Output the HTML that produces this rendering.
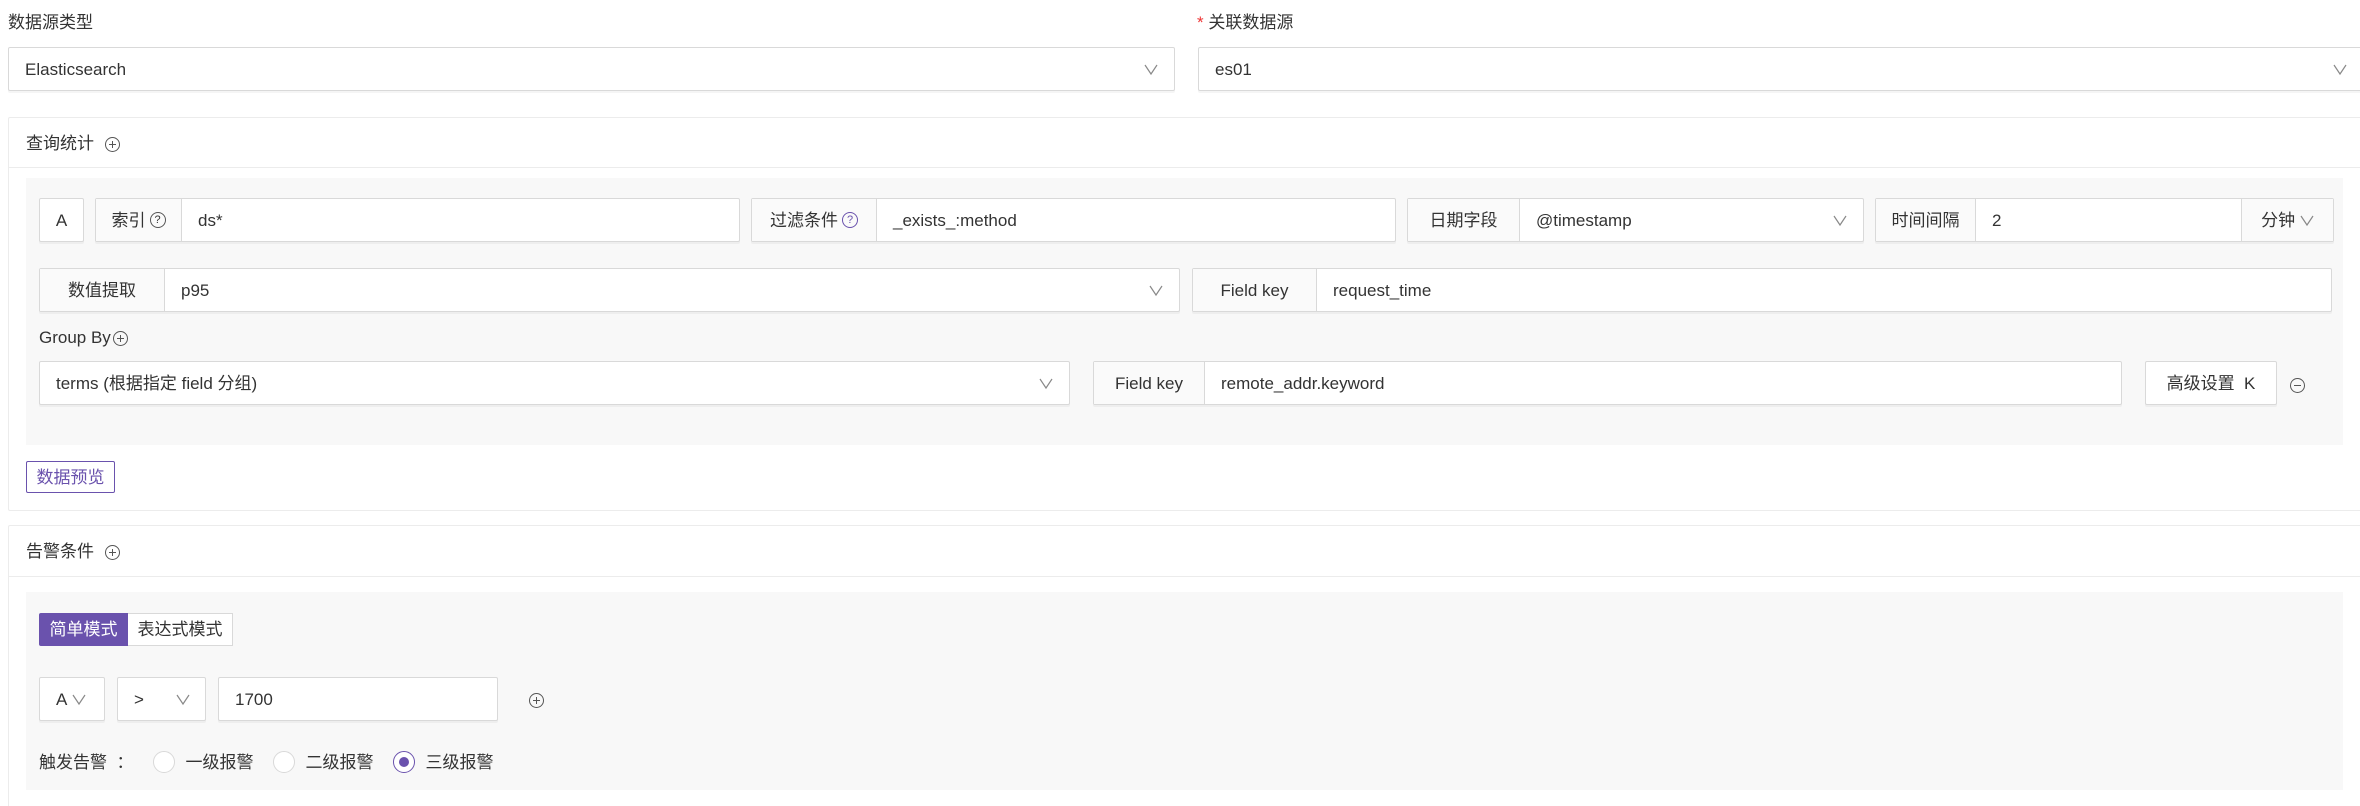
<!DOCTYPE html>
<html><head><meta charset="utf-8"><style>
*{box-sizing:border-box;margin:0;padding:0}
html,body{width:2360px;height:806px;overflow:hidden}
body{background:#fff;font-family:"Liberation Sans","Noto Sans CJK SC",sans-serif;font-size:17px;line-height:1;color:#333}
#w{position:relative;width:2360px;height:806px;overflow:hidden}
.a{position:absolute}
.box{position:absolute;border:1px solid #d9d9d9;background:#fff;border-radius:2px;box-shadow:0 2px 0 rgba(0,0,0,.04);display:flex;align-items:center}
.lab{background:#fafafa;border-right:1px solid #d9d9d9;height:100%;display:flex;align-items:center;justify-content:center;flex:none}
.val{padding-left:16px;flex:1}
.arr{width:14px;height:14px;margin-right:16px;flex:none}
.panel{position:absolute;left:8px;right:-2px;border:1px solid #ececec;border-radius:2px}
.gray{position:absolute;background:#f8f8f8}
.circ{display:inline-block;width:15px;height:15px;border:1.3px solid #555;border-radius:50%;position:relative;vertical-align:middle}
.circ:before{content:"";position:absolute;left:3px;right:3px;top:6px;height:1.3px;background:#555}
.circ.p:after{content:"";position:absolute;top:3px;bottom:3px;left:6px;width:1.3px;background:#555}
.q{display:inline-block;width:16px;height:16px;border:1.3px solid #555;border-radius:50%;font-size:11px;line-height:14px;text-align:center;vertical-align:middle;margin-left:4px}
.radio{display:inline-block;width:22px;height:22px;border:1px solid #d9d9d9;border-radius:50%;background:#fff;vertical-align:middle;margin-right:10px;position:relative}
</style></head><body><div id="w">
<svg width="0" height="0" style="position:absolute"><defs><symbol id="dn" viewBox="0 0 14 14"><path d="M1 3 L7 12 L13 3" fill="none" stroke="#888" stroke-width="1.2"/></symbol></defs></svg>

<div class="a" style="left:8px;top:14px">数据源类型</div>
<div class="box" style="left:8px;top:47px;width:1167px;height:44px"><span class="val">Elasticsearch</span><svg class="arr"><use href="#dn"/></svg></div>
<div class="a" style="left:1197px;top:14px"><span style="color:#e33">*</span> 关联数据源</div>
<div class="box" style="left:1198px;top:47px;width:1180px;height:44px"><span class="val">es01</span><svg class="arr" style="margin-right:30px"><use href="#dn"/></svg></div>

<div class="panel" style="top:117px;height:394px">
 <div class="a" style="left:0;right:0;top:0;height:50px;border-bottom:1px solid #ececec"></div>
 <div class="a" style="left:17px;top:17px">查询统计 <span class="circ p" style="margin-left:6px"></span></div>
</div>
<div class="gray" style="left:26px;top:178px;width:2317px;height:267px"></div>
<div class="box" style="left:39px;top:198px;width:45px;height:44px;justify-content:center">A</div>
<div class="box" style="left:95px;top:198px;width:645px;height:44px"><span class="lab" style="width:86px">索引<span class="q">?</span></span><span class="val">ds*</span></div>
<div class="box" style="left:751px;top:198px;width:645px;height:44px"><span class="lab" style="width:125px">过滤条件<span class="q" style="border-color:#6a52ad;color:#6a52ad">?</span></span><span class="val">_exists_:method</span></div>
<div class="box" style="left:1407px;top:198px;width:457px;height:44px"><span class="lab" style="width:112px">日期字段</span><span class="val">@timestamp</span><svg class="arr"><use href="#dn"/></svg></div>
<div class="box" style="left:1875px;top:198px;width:459px;height:44px"><span class="lab" style="width:100px">时间间隔</span><span class="val">2</span><span class="lab" style="width:92px;border-right:none;border-left:1px solid #d9d9d9">分钟&nbsp;<svg style="width:14px;height:14px"><use href="#dn"/></svg></span></div>

<div class="box" style="left:39px;top:268px;width:1141px;height:44px"><span class="lab" style="width:125px">数值提取</span><span class="val">p95</span><svg class="arr"><use href="#dn"/></svg></div>
<div class="box" style="left:1192px;top:268px;width:1140px;height:44px"><span class="lab" style="width:124px">Field key</span><span class="val">request_time</span></div>

<div class="a" style="left:39px;top:329px">Group By<span class="circ p" style="margin-left:2px"></span></div>
<div class="box" style="left:39px;top:361px;width:1031px;height:44px"><span class="val">terms (根据指定 field 分组)</span><svg class="arr"><use href="#dn"/></svg></div>
<div class="box" style="left:1093px;top:361px;width:1029px;height:44px"><span class="lab" style="width:111px">Field key</span><span class="val">remote_addr.keyword</span></div>
<div class="box" style="left:2145px;top:361px;width:132px;height:44px;justify-content:center">高级设置&nbsp;&nbsp;K</div>
<span class="a circ" style="left:2290px;top:376px"></span>

<div class="a" style="left:26px;top:461px;width:89px;height:32px;border:1.5px solid #6a52ad;border-radius:2px;color:#6a52ad;display:flex;align-items:center;justify-content:center">数据预览</div>

<div class="panel" style="top:525px;height:320px">
 <div class="a" style="left:0;right:0;top:0;height:51px;border-bottom:1px solid #ececec"></div>
 <div class="a" style="left:17px;top:17px">告警条件 <span class="circ p" style="margin-left:6px"></span></div>
</div>
<div class="gray" style="left:26px;top:592px;width:2317px;height:198px"></div>
<div class="a" style="left:39px;top:613px;width:89px;height:33px;background:#6a52ad;color:#fff;display:flex;align-items:center;justify-content:center;border-radius:2px 0 0 2px">简单模式</div>
<div class="a" style="left:128px;top:613px;width:105px;height:33px;background:#fff;border:1px solid #d9d9d9;border-left:none;display:flex;align-items:center;justify-content:center">表达式模式</div>

<div class="box" style="left:39px;top:677px;width:66px;height:44px"><span style="padding-left:16px">A</span><svg style="width:14px;height:14px;margin-left:5px"><use href="#dn"/></svg></div>
<div class="box" style="left:117px;top:677px;width:89px;height:44px"><span style="padding-left:16px">&gt;</span><svg style="width:14px;height:14px;margin-left:32px"><use href="#dn"/></svg></div>
<div class="box" style="left:218px;top:677px;width:280px;height:44px"><span class="val">1700</span></div>
<span class="a circ p" style="left:509px;top:691px"></span>

<div class="a" style="left:39px;top:751px;display:flex;align-items:center">
 <span>触发告警&nbsp;&nbsp;：</span>
 <span style="margin-left:20px" class="radio"></span><span>一级报警</span>
 <span style="margin-left:20px" class="radio"></span><span>二级报警</span>
 <span style="margin-left:20px;border-color:#6a52ad" class="radio"><span style="position:absolute;left:5px;top:5px;width:10px;height:10px;border-radius:50%;background:#6a52ad"></span></span><span>三级报警</span>
</div>
</div></body></html>
